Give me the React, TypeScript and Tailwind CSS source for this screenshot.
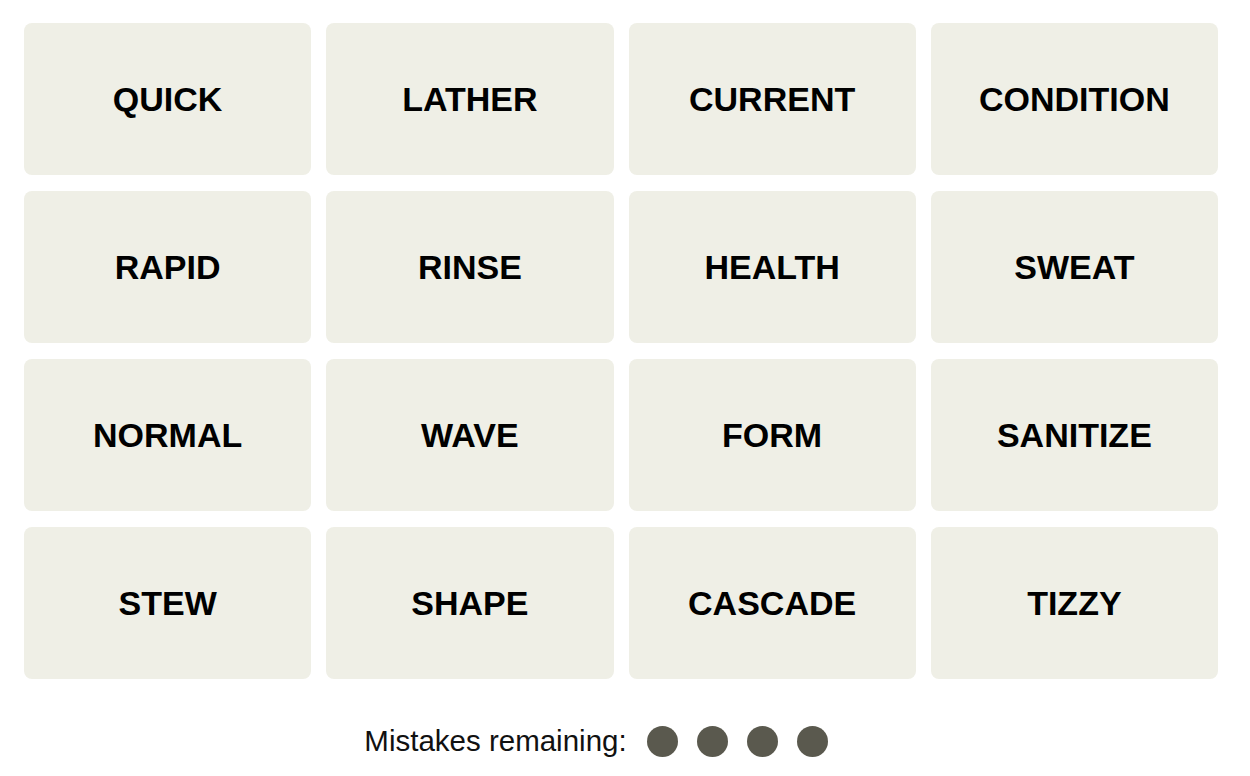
const words = [
  "QUICK",
  "LATHER",
  "CURRENT",
  "CONDITION",
  "RAPID",
  "RINSE",
  "HEALTH",
  "SWEAT",
  "NORMAL",
  "WAVE",
  "FORM",
  "SANITIZE",
  "STEW",
  "SHAPE",
  "CASCADE",
  "TIZZY",
];

const App = () => {
  const mistakesLeft = 4;

  return (
    <div className="w-[1250px] h-[776px] bg-white font-['Liberation_Sans',Arial,sans-serif] text-black overflow-hidden">
      <div className="ml-[24px] pt-[23px] w-[1194px] grid grid-cols-4 gap-x-[15px] gap-y-[16px]">
        {words.map((word) => (
          <button
            key={word}
            className="h-[152px] rounded-[8px] bg-[#efefe6] flex items-center justify-center text-[34px] font-bold leading-none"
          >
            {word}
          </button>
        ))}
      </div>

      <div className="mt-[47px] flex items-center justify-center gap-[20px] pr-[58px]">
        <span className="text-[29.5px] leading-none text-[#111] pb-[2px]">
          Mistakes remaining:
        </span>
        <div className="flex gap-[19px]">
          {Array.from({ length: mistakesLeft }).map((_, i) => (
            <span key={i} className="w-[31px] h-[31px] rounded-full bg-[#5a594e]" />
          ))}
        </div>
      </div>
    </div>
  );
};

export default App;
